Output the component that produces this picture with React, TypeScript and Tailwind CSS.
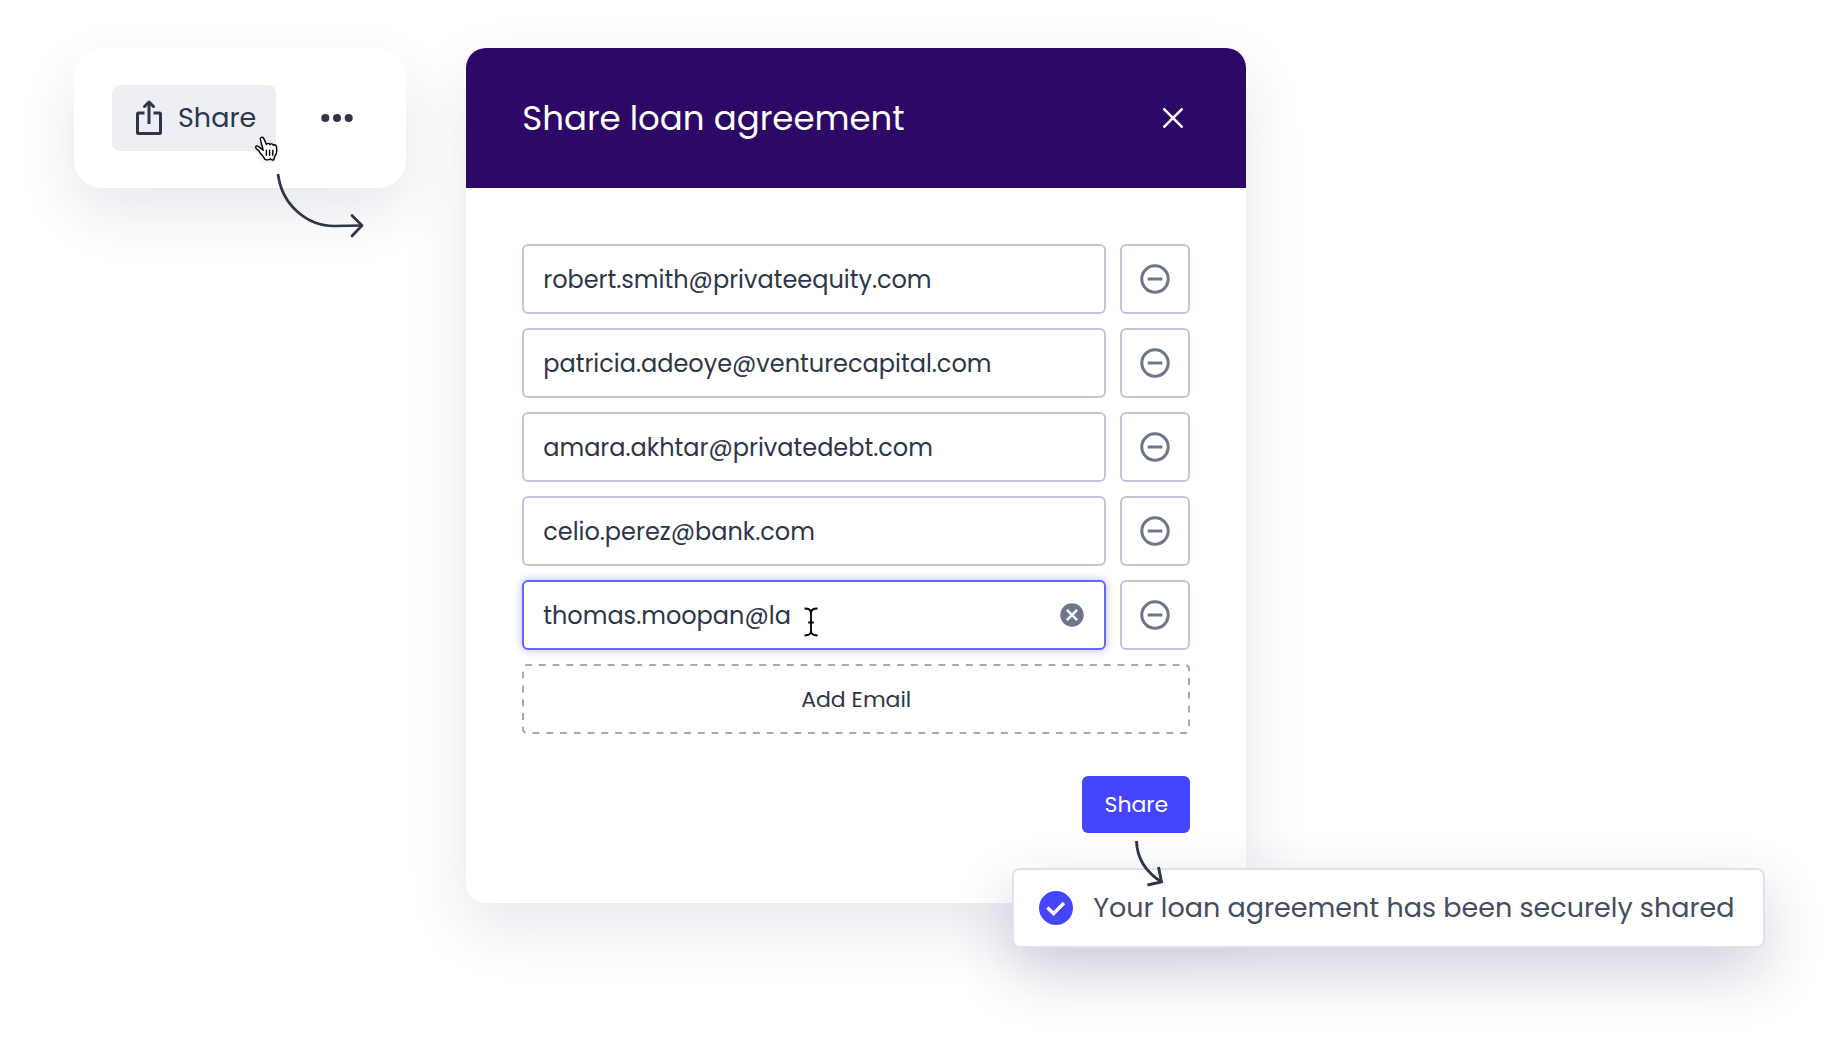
import { useState } from "react";

interface IconProps {
   className?: string;
}

const ShareIcon = ({ className }: IconProps) => (
   <svg
      viewBox="0 0 26 36"
      className={className}
      fill="none"
      stroke="currentColor"
      strokeWidth="3"
      strokeLinecap="round"
      strokeLinejoin="round"
      aria-hidden="true">
      <path d="M8.500 13H2.500a1 1 0 0 0-1 1v18.500a1 1 0 0 0 1 1h21a1 1 0 0 0 1-1V14a1 1 0 0 0-1-1h-6" strokeLinecap="butt" />
      <path d="M13 24V3.500" strokeLinecap="butt" />
      <path d="M8.500 6.500 13 2l4.500 4.500" />
   </svg>
);

const DotsIcon = ({ className }: IconProps) => (
   <svg viewBox="0 0 32 8" className={className} fill="currentColor" aria-hidden="true">
      <circle cx="4.300" cy="4" r="4" />
      <circle cx="16" cy="4" r="4" />
      <circle cx="27.700" cy="4" r="4" />
   </svg>
);

const CloseIcon = ({ className }: IconProps) => (
   <svg
      viewBox="0 0 20 20"
      className={className}
      fill="none"
      stroke="currentColor"
      strokeWidth="2.600"
      strokeLinecap="round"
      aria-hidden="true">
      <path d="M1.300 1.300l17.400 17.400M18.700 1.300 1.300 18.700" />
   </svg>
);

const MinusCircleIcon = ({ className }: IconProps) => (
   <svg
      viewBox="0 0 30 30"
      className={className}
      fill="none"
      stroke="currentColor"
      strokeWidth="3"
      aria-hidden="true">
      <circle cx="15" cy="15" r="13.200" />
      <path d="M7.700 15h14.600" />
   </svg>
);

const ClearIcon = ({ className }: IconProps) => (
   <svg viewBox="0 0 24 24" className={className} aria-hidden="true">
      <circle cx="12" cy="12" r="11.700" fill="currentColor" />
      <path d="M6.900 6.900l10.200 10.200M17.100 6.900 6.900 17.100" stroke="#fff" strokeWidth="2.500" />
   </svg>
);

const CheckIcon = ({ className }: IconProps) => (
   <svg viewBox="0 0 34 34" className={className} aria-hidden="true">
      <circle cx="17" cy="17" r="17" fill="#4545ff" />
      <path d="M8.500 16.500 14.500 22.500 25 12" fill="none" stroke="#fff" strokeWidth="3.400" />
   </svg>
);

const HandCursor = ({ className }: IconProps) => (
   <svg
      viewBox="0 0 24 26"
      className={className}
      fill="#fff"
      stroke="#000"
      strokeWidth="1.400"
      strokeLinejoin="round"
      strokeLinecap="round"
      aria-hidden="true">
      <path d="M8.200 14.200 5.400 3.600C4.900 1.300 7.900.3 8.800 2.500l2.600 6.100c.6-1.700 3-1.700 3.500.100.800-1.400 3.200-1 3.400.700 1-1.200 3.200-.3 3.200 1.400.2 1.800.4 4.200-.2 6.300-.6 2.300-2.300 3.800-2.400 6.500-1 .7-2.700.5-3.400-.9-.7 1.400-5 1.500-5.700.500-.9-2.900-4.200-4.700-5.600-8L1 12.300c-1-2 1-3.100 2.500-1.800z" />
      <path d="M11.400 14.200v5M14.600 14.200v5M17.800 14.200v5" />
   </svg>
);

const TextCursor = ({ className }: IconProps) => (
   <svg
      viewBox="0 0 14 30"
      className={className}
      fill="none"
      stroke="#000"
      strokeWidth="1.800"
      aria-hidden="true">
      <path d="M.5 1.500C4 1.500 7 2.500 7 6v18c0 3.500-3 4.500-6.500 4.500M13.500 1.500C10 1.500 7 2.500 7 6M7 24c0 3.500 3 4.500 6.500 4.500M4.200 15.500h5.600" />
   </svg>
);

const CurvedArrow = ({ className }: IconProps) => (
   <svg
      viewBox="0 0 90 66"
      className={className}
      fill="none"
      stroke="#2d3648"
      strokeWidth="2.700"
      aria-hidden="true">
      <path d="M4 2C8 34 34 54 60 54l28-.5" />
      <path d="M78 43.500 88 53.500 78 64" strokeLinecap="round" strokeLinejoin="round" />
   </svg>
);

const ShortArrow = ({ className }: IconProps) => (
   <svg
      viewBox="0 0 32 48"
      className={className}
      fill="none"
      stroke="#2d3648"
      strokeWidth="2.900"
      aria-hidden="true">
      <path d="M4.500 2C5 20 14 33 29.500 43" />
      <path d="M26.500 28 29.500 43 15.500 46" />
   </svg>
);

const EMAILS = [
   "robert.smith@privateequity.com",
   "patricia.adeoye@venturecapital.com",
   "amara.akhtar@privatedebt.com",
   "celio.perez@bank.com",
   "thomas.moopan@la",
];

interface EmailRowProps {
   index: number;
   value: string;
   active?: boolean;
   onChange: (value: string) => void;
   onRemove: () => void;
}

const EmailRow = ({ index, value, active, onChange, onRemove }: EmailRowProps) => (
   <div className="flex gap-3.5">
      <div className="relative min-w-0 flex-1">
         <input
            type="email"
            aria-label={`Email ${index + 1}`}
            value={value}
            onChange={(e) => onChange(e.target.value)}
            className={
               active
                  ? "h-[70px] w-full rounded-md border-2 border-[#6666ff] bg-white pl-[19px] pr-14 text-2xl text-[#2d3648] shadow-[0_0_8px_rgba(69,69,255,0.4)] outline-none"
                  : "h-[70px] w-full rounded-md border-2 border-[#c3c6d6] bg-white px-[19px] text-2xl text-[#2d3648] outline-none"
            }
         />
         {active && (
            <>
               <button
                  type="button"
                  aria-label="Clear email"
                  onClick={() => onChange("")}
                  className="absolute inset-y-0 right-[22px] my-auto flex h-6 cursor-pointer items-center text-[#6d768a]">
                  <ClearIcon className="size-6" />
               </button>
               <TextCursor className="pointer-events-none absolute left-[282px] top-[27px] h-[30px] w-3.5" />
            </>
         )}
      </div>
      <button
         type="button"
         aria-label={`Remove email ${index + 1}`}
         onClick={onRemove}
         className="flex size-[70px] shrink-0 cursor-pointer items-center justify-center rounded-md border-2 border-[#c3c6d6] bg-white text-[#6d768a]">
         <MinusCircleIcon className="size-[30px]" />
      </button>
   </div>
);

const ShareToolbar = () => (
   <div className="relative flex shrink-0 items-center gap-[45px] rounded-[28px] bg-white py-[37px] pl-[38px] pr-[53px] shadow-[0_24px_60px_rgba(40,30,90,0.11)]">
      <button
         type="button"
         className="flex h-[66px] cursor-pointer items-center gap-4 rounded-lg bg-[#eeeff4] pl-6 pr-5 text-[27px] text-[#2d3648]">
         <ShareIcon className="h-9 w-[26px]" />
         Share
      </button>
      <button type="button" aria-label="More options" className="cursor-pointer text-[#2d3648]">
         <DotsIcon className="h-2 w-8" />
      </button>
      <HandCursor className="pointer-events-none absolute left-[181px] top-[88px] h-[26px] w-6 drop-shadow" />
      <CurvedArrow className="pointer-events-none absolute left-[200px] top-[124px] h-[66px] w-[90px]" />
   </div>
);

const Toast = ({ message }: { message: string }) => (
   <div
      role="status"
      className="absolute left-[546px] top-[820px] flex h-20 items-center gap-5 whitespace-nowrap rounded-lg border-2 border-[#e0e2eb] bg-white pl-[25px] pr-7 text-[27px] text-[#454d60] shadow-[0_24px_60px_rgba(40,40,100,0.22)]">
      <CheckIcon className="size-[34px] shrink-0" />
      {message}
   </div>
);

export default function App() {
   const [emails, setEmails] = useState(EMAILS);

   const updateEmail = (index: number, value: string) =>
      setEmails(emails.map((email, i) => (i === index ? value : email)));

   return (
      <main className="flex min-h-screen items-start gap-[60px] bg-white px-[74px] pt-12 pb-[149px] font-['Poppins','Inter',sans-serif]">
         <ShareToolbar />

         <section
            aria-labelledby="share-title"
            className="relative max-w-[780px] flex-1 rounded-[20px] bg-white shadow-[0_24px_64px_rgba(40,30,90,0.11)]">
            <header className="flex h-[140px] items-center justify-between rounded-t-[20px] bg-[#2d0866] pl-14 pr-[63px] text-white">
               <h1 id="share-title" className="text-[34px]">
                  Share loan agreement
               </h1>
               <button type="button" aria-label="Close" className="cursor-pointer">
                  <CloseIcon className="size-5" />
               </button>
            </header>

            <form className="flex flex-col gap-3.5 px-14 pt-14 pb-[70px]" onSubmit={(e) => e.preventDefault()}>
               {emails.map((email, i) => (
                  <EmailRow
                     key={i}
                     index={i}
                     value={email}
                     active={i === emails.length - 1}
                     onChange={(value) => updateEmail(i, value)}
                     onRemove={() => setEmails(emails.filter((_, n) => n !== i))}
                  />
               ))}

               <button
                  type="button"
                  onClick={() => setEmails([...emails, ""])}
                  className="relative h-[70px] w-full cursor-pointer text-[22px] text-[#2d3648]">
                  {/* CSS dashed borders are too tight, so the outline is drawn */}
                  <svg className="absolute inset-px h-[68px] w-[calc(100%-2px)] overflow-visible" aria-hidden="true">
                     <rect
                        width="100%"
                        height="100%"
                        rx="4"
                        fill="none"
                        stroke="#a3a9bb"
                        strokeWidth="2"
                        pathLength="1484"
                        strokeDasharray="7 7"
                        strokeDashoffset="2"
                     />
                  </svg>
                  Add Email
               </button>

               <div className="relative mt-7 self-end">
                  <button
                     type="submit"
                     className="h-[57px] cursor-pointer rounded-md bg-[#4545ff] px-[22px] text-[22px] text-white">
                     Share
                  </button>
                  <ShortArrow className="pointer-events-none absolute left-[50px] top-[63px] z-10 h-12 w-8" />
               </div>
            </form>

            <Toast message="Your loan agreement has been securely shared" />
         </section>
      </main>
   );
}
